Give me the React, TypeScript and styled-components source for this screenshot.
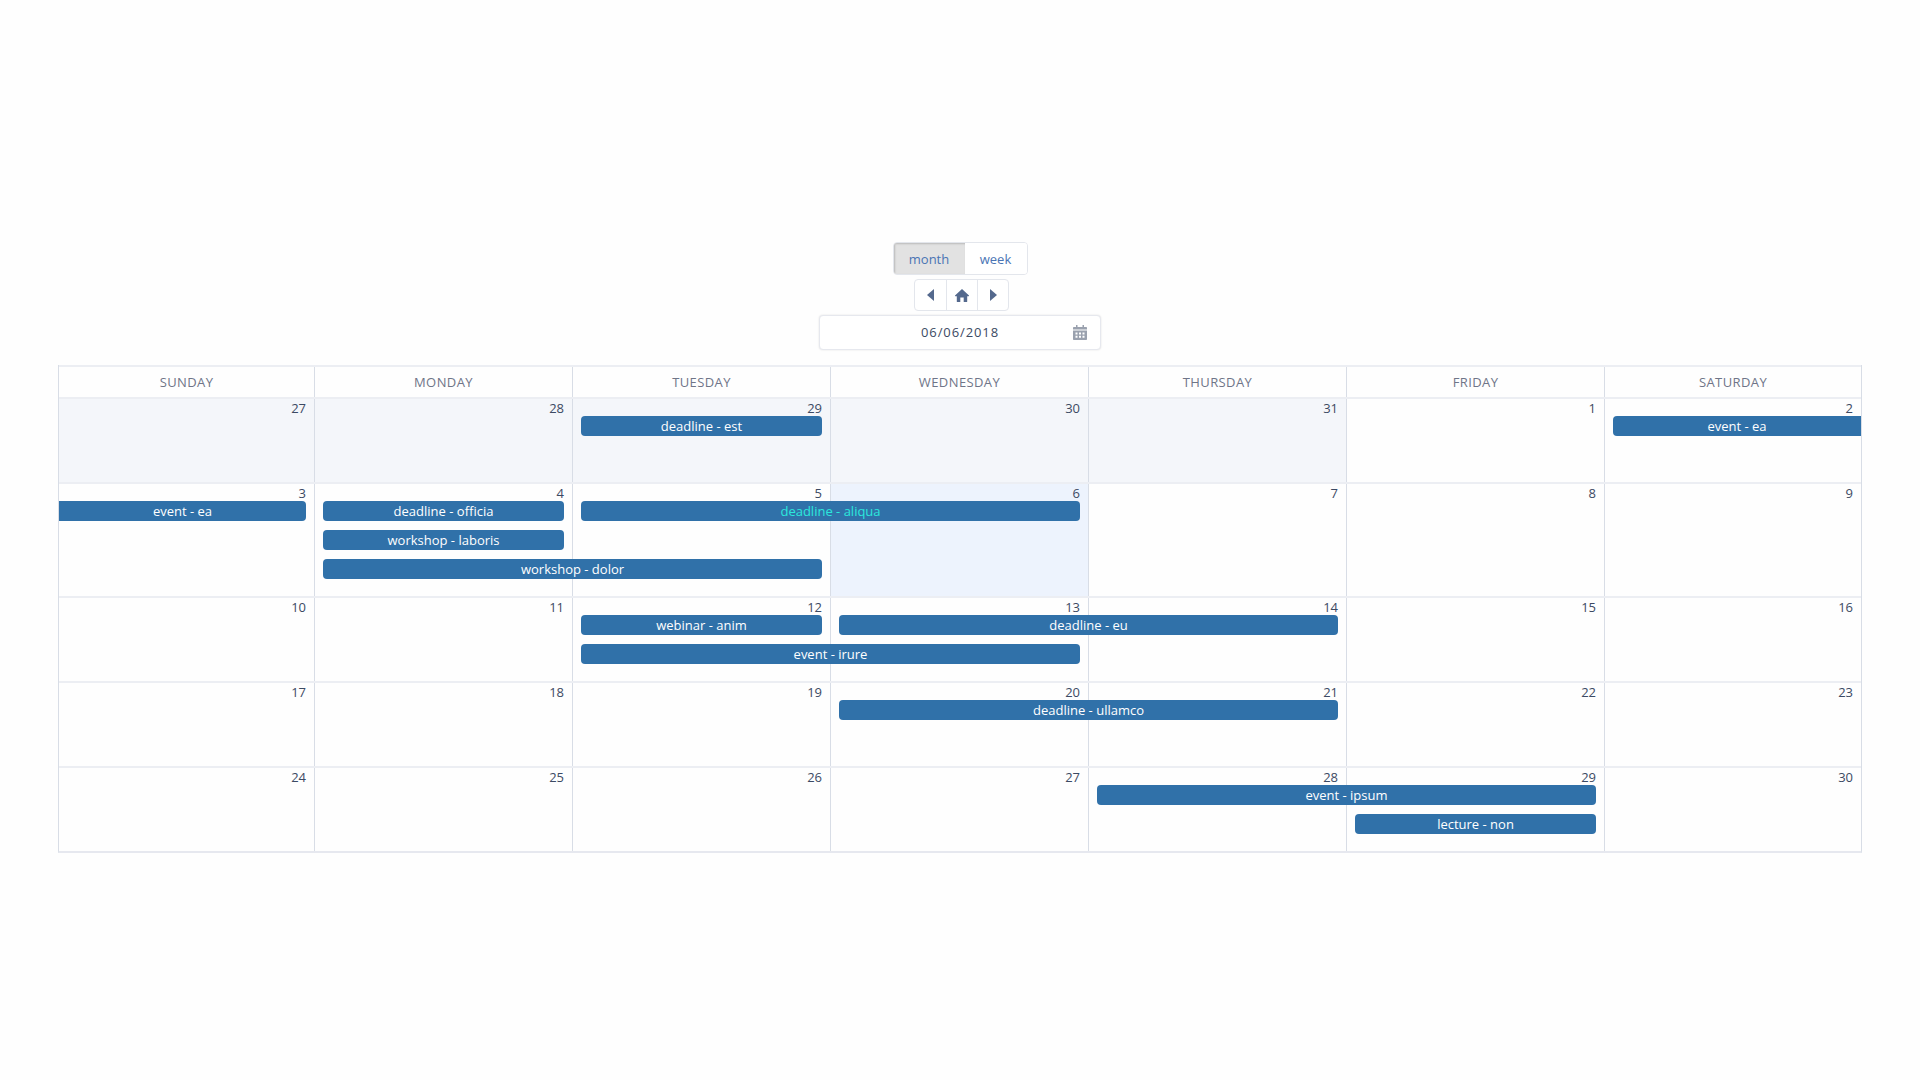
import React from "react";
import styled, { createGlobalStyle } from "styled-components";

const GlobalStyle = createGlobalStyle`
  html, body {
    margin: 0;
    padding: 0;
    background: #fefefe;
  }
  body {
    font-family: "Open Sans", "Noto Sans", sans-serif;
    color: #16325c;
  }
`;

const Page = styled.div`
  padding: 242px 58px 0;
  display: flex;
  flex-direction: column;
  align-items: center;
`;

const Toggle = styled.div`
  display: flex;
  height: 33px;
  box-sizing: border-box;
  border: 1px solid #e3e6ec;
  border-radius: 4px;
  overflow: hidden;
  background: #fff;
`;

const ToggleButton = styled.button<{ $active?: boolean; $w: number }>`
  width: ${(p) => p.$w}px;
  border: 0;
  padding: 0;
  font: 13px "Open Sans", sans-serif;
  color: #4a74b4;
  background: ${(p) => (p.$active ? "#e2e2e2" : "#fff")};
  box-shadow: ${(p) => (p.$active ? "inset 1px 1px 2px rgba(0,0,0,.18)" : "none")};
`;

const NavGroup = styled.div`
  display: flex;
  margin: 4px 0 0 3px;
  height: 32px;
  box-sizing: border-box;
  border: 1px solid #e3e6ec;
  border-radius: 4px;
  background: #fff;
`;

const NavButton = styled.button`
  width: 31px;
  border: 0;
  padding: 0;
  background: transparent;
  display: flex;
  align-items: center;
  justify-content: center;
  & + & {
    border-left: 1px solid #e3e6ec;
  }
`;

const DateField = styled.div`
  width: 282px;
  height: 35px;
  margin-top: 4px;
  box-sizing: border-box;
  border: 1px solid #e6e8ee;
  border-radius: 4px;
  box-shadow: 0 0 2px rgba(0, 0, 0, 0.12);
  background: #fff;
  display: flex;
  align-items: center;
  justify-content: center;
  position: relative;
  font-size: 13px;
  letter-spacing: 0.9px;
  color: #3c4a63;
  padding-bottom: 2px;
`;

const CalendarIcon = styled.svg`
  position: absolute;
  right: 13px;
  top: 9px;
`;

const Calendar = styled.div`
  width: 1804px;
  margin-top: 15px;
  box-sizing: border-box;
  border-right: 1px solid #d8dde6;
  border-left: 1px solid #d8dde6;
  border-bottom: 2px solid #e6e8ef;
`;

const columns = "255px repeat(5, 258px) 257px";

const HeaderRow = styled.div`
  display: grid;
  grid-template-columns: ${columns};
  height: 32px;
  box-sizing: border-box;
  border-top: 2px solid #eceef3;
`;

const HeaderCell = styled.div`
  display: flex;
  align-items: center;
  justify-content: center;
  font-size: 13px;
  letter-spacing: 0.4px;
  color: #6f7588;
  text-transform: uppercase;
  & + & {
    border-left: 1px solid #d8dde6;
  }
`;

const WeekRow = styled.div<{ $bars: number }>`
  display: grid;
  grid-template-columns: ${columns};
  grid-template-rows: 17px repeat(${(p) => p.$bars}, 29px) 1fr;
  min-height: ${(p) => (p.$bars === 3 ? 114 : 85)}px;
  box-sizing: border-box;
  border-top: 2px solid #eceef3;
`;

const DayCell = styled.div<{ $col: number; $muted?: boolean; $today?: boolean }>`
  grid-column: ${(p) => p.$col};
  grid-row: 1 / -1;
  box-sizing: border-box;
  padding: 0 8px 0 0;
  text-align: right;
  font-size: 13px;
  line-height: 18px;
  color: #3c4a63;
  background: ${(p) => (p.$today ? "#edf3fd" : p.$muted ? "#f4f6fa" : "transparent")};
  border-left: ${(p) => (p.$col > 1 ? "1px solid #d8dde6" : "0")};
`;

const EventBar = styled.div<{ $start: number; $span: number; $row: number; $clipL?: boolean; $clipR?: boolean; $accent?: boolean }>`
  grid-column: ${(p) => p.$start} / span ${(p) => p.$span};
  grid-row: ${(p) => p.$row + 1};
  z-index: 1;
  height: 20px;
  margin: 0 ${(p) => (p.$clipR ? 0 : 8)}px 0 ${(p) => (p.$clipL ? 0 : 9)}px;
  background: #3071a9;
  border-radius: ${(p) => (p.$clipL ? 0 : 4)}px ${(p) => (p.$clipR ? 0 : 4)}px ${(p) => (p.$clipR ? 0 : 4)}px ${(p) => (p.$clipL ? 0 : 4)}px;
  color: ${(p) => (p.$accent ? "#2be8dc" : "#fff")};
  font-size: 13px;
  line-height: 20px;
  text-align: center;
`;

type Ev = { label: string; start: number; span: number; row: number; clipL?: boolean; clipR?: boolean; accent?: boolean };
type Week = { days: number[]; muted?: number; today?: number; bars: number; events: Ev[] };

const weeks: Week[] = [
  {
    days: [27, 28, 29, 30, 31, 1, 2],
    muted: 5,
    bars: 1,
    events: [
      { label: "deadline - est", start: 3, span: 1, row: 1 },
      { label: "event - ea", start: 7, span: 1, row: 1, clipR: true },
    ],
  },
  {
    days: [3, 4, 5, 6, 7, 8, 9],
    today: 3,
    bars: 3,
    events: [
      { label: "event - ea", start: 1, span: 1, row: 1, clipL: true },
      { label: "deadline - officia", start: 2, span: 1, row: 1 },
      { label: "deadline - aliqua", start: 3, span: 2, row: 1, accent: true },
      { label: "workshop - laboris", start: 2, span: 1, row: 2 },
      { label: "workshop - dolor", start: 2, span: 2, row: 3 },
    ],
  },
  {
    days: [10, 11, 12, 13, 14, 15, 16],
    bars: 2,
    events: [
      { label: "webinar - anim", start: 3, span: 1, row: 1 },
      { label: "deadline - eu", start: 4, span: 2, row: 1 },
      { label: "event - irure", start: 3, span: 2, row: 2 },
    ],
  },
  {
    days: [17, 18, 19, 20, 21, 22, 23],
    bars: 1,
    events: [{ label: "deadline - ullamco", start: 4, span: 2, row: 1 }],
  },
  {
    days: [24, 25, 26, 27, 28, 29, 30],
    bars: 2,
    events: [
      { label: "event - ipsum", start: 5, span: 2, row: 1 },
      { label: "lecture - non", start: 6, span: 1, row: 2 },
    ],
  },
];

const dayNames = ["Sunday", "Monday", "Tuesday", "Wednesday", "Thursday", "Friday", "Saturday"];

export default function App() {
  return (
    <>
      <GlobalStyle />
      <Page>
        <Toggle>
          <ToggleButton $active $w={71}>month</ToggleButton>
          <ToggleButton $w={62}>week</ToggleButton>
        </Toggle>
        <NavGroup>
          <NavButton aria-label="previous">
            <svg width="8" height="12" viewBox="0 0 8 12"><path d="M7 0v12L0 6z" fill="#54698d" /></svg>
          </NavButton>
          <NavButton aria-label="today">
            <svg width="14" height="13" viewBox="0 0 14 13">
              <path d="M7 0 0 6.6c-.2.3 0 .6.3.6h1.5v5.2c0 .3.2.6.5.6h3V8.6h3.4V13h3c.3 0 .5-.3.5-.6V7.2h1.5c.3 0 .5-.3.3-.6z" fill="#54698d" />
            </svg>
          </NavButton>
          <NavButton aria-label="next">
            <svg width="8" height="12" viewBox="0 0 8 12"><path d="M1 0v12l7-6z" fill="#54698d" /></svg>
          </NavButton>
        </NavGroup>
        <DateField>
          06/06/2018
          <CalendarIcon width="14" height="15" viewBox="0 0 14 15">
            <path
              fill="#9aa1ae"
              fillRule="evenodd"
              d="M3 0h1.5v2h5V0H11v2h2c.6 0 1 .4 1 1v1.5H0V3c0-.6.4-1 1-1h2zM0 5.5h14V14c0 .6-.4 1-1 1H1c-.6 0-1-.4-1-1zM2.5 7.5v2h2v-2zm3.5 0v2h2v-2zm3.5 0v2h2v-2zm-7 3.2v2h2v-2zm3.5 0v2h2v-2zm3.5 0v2h2v-2z"
            />
          </CalendarIcon>
        </DateField>
        <Calendar>
          <HeaderRow>
            {dayNames.map((d) => (
              <HeaderCell key={d}>{d}</HeaderCell>
            ))}
          </HeaderRow>
          {weeks.map((w, i) => (
            <WeekRow key={i} $bars={w.bars}>
              {w.days.map((d, j) => (
                <DayCell key={j} $col={j + 1} $muted={w.muted !== undefined && j < w.muted} $today={w.today === j}>
                  {d}
                </DayCell>
              ))}
              {w.events.map((e) => (
                <EventBar key={e.label} $start={e.start} $span={e.span} $row={e.row} $clipL={e.clipL} $clipR={e.clipR} $accent={e.accent}>
                  {e.label}
                </EventBar>
              ))}
            </WeekRow>
          ))}
        </Calendar>
      </Page>
    </>
  );
}
